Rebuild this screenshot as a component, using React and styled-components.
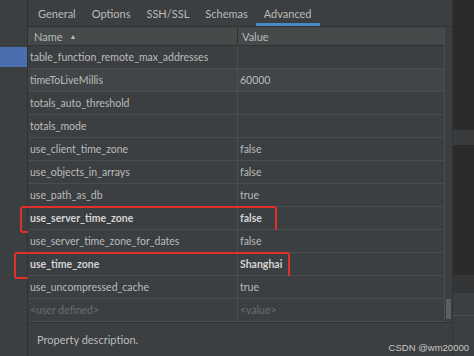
import React from 'react'
import styled, { createGlobalStyle } from 'styled-components'

const GlobalStyle = createGlobalStyle`
  html, body {
    margin: 0;
    padding: 0;
    background: #2b2b2b;
  }
  body {
    font-family: Lato, 'Open Sans', 'Liberation Sans', sans-serif;
  }
`

const tabs = ['General', 'Options', 'SSH/SSL', 'Schemas', 'Advanced']

const rows = [
  { name: 'table_function_remote_max_addresses', value: '' },
  { name: 'timeToLiveMillis', value: '60000', lit: true },
  { name: 'totals_auto_threshold', value: '' },
  { name: 'totals_mode', value: '' },
  { name: 'use_client_time_zone', value: 'false' },
  { name: 'use_objects_in_arrays', value: 'false' },
  { name: 'use_path_as_db', value: 'true' },
  { name: 'use_server_time_zone', value: 'false', bold: true, mark: { left: -8, width: 253 } },
  { name: 'use_server_time_zone_for_dates', value: 'false' },
  { name: 'use_time_zone', value: 'Shanghai', bold: true, mark: { left: -14, width: 272 } },
  { name: 'use_uncompressed_cache', value: 'true' },
  { name: '<user defined>', value: '<value>', placeholder: true },
]

const App = () => {
  return (
    <>
      <GlobalStyle />
      <Screen>
        <LeftStrip>
          <StripItem />
          <StripItem $selected />
        </LeftStrip>
        <Main>
          <TabBar>
            {tabs.map((t) => (
              <Tab key={t} $active={t === 'Advanced'}>
                {t}
              </Tab>
            ))}
          </TabBar>
          <TableWrap>
            <Table>
              <HeaderRow>
                <HeadCell>
                  Name <SortArrow>▲</SortArrow>
                </HeadCell>
                <HeadCell $value>Value</HeadCell>
              </HeaderRow>
              {rows.map((r) => (
                <Row key={r.name} $lit={r.lit}>
                  <Cell $bold={r.bold} $placeholder={r.placeholder}>
                    {r.name}
                  </Cell>
                  <Cell $value $bold={r.bold} $placeholder={r.placeholder}>
                    {r.value}
                  </Cell>
                  {r.mark && (
                    <Mark style={{ left: r.mark.left, width: r.mark.width }} />
                  )}
                </Row>
              ))}
            </Table>
            <ScrollTrack>
              <ScrollThumb />
            </ScrollTrack>
          </TableWrap>
          <Description>Property description.</Description>
        </Main>
        <RightPane>
          <Band $h={130} $bg='#2b2b2b' />
          <Band $h={15} $bg='#393b3c' />
          <Band $h={130} $bg='#2b2b2b' />
          <Band $h={18} $bg='#333536' />
          <Band $h={22} $bg='#3c3f41' $line />
          <Band $h={41} $bg='#3c3f41' />
        </RightPane>
        <Watermark>CSDN @wm20000</Watermark>
      </Screen>
    </>
  )
}

const Screen = styled.div`
  position: relative;
  width: 474px;
  height: 356px;
  overflow: hidden;
  display: flex;
  background: #3c3f41;
  color: #bbbbbb;
  font-size: 10.5px;
`

const LeftStrip = styled.div`
  width: 27px;
  flex: none;
  background: #3c3f41;
  border-right: 1px solid #2f3133;
  display: flex;
  flex-direction: column;
`

const StripItem = styled.div`
  height: ${(p) => (p.$selected ? '20px' : '47px')};
  background: ${(p) => (p.$selected ? '#4b6eaf' : 'transparent')};
`

const Main = styled.div`
  width: 424px;
  flex: none;
  display: flex;
  flex-direction: column;
  background: #3c3f41;
  border-right: 1px solid #313335;
`

const TabBar = styled.div`
  height: 26px;
  display: flex;
  align-items: stretch;
  padding-left: 2px;
  border-bottom: 1px solid #323232;
`

const Tab = styled.div`
  padding: 0 8px;
  display: flex;
  align-items: center;
  font-size: 11px;
  color: #bbbbbb;
  box-shadow: ${(p) => (p.$active ? 'inset 0 -3px 0 #4a88c7' : 'none')};
`

const TableWrap = styled.div`
  display: flex;
  height: 295px;
  border-bottom: 1px solid #323232;
`

const Table = styled.div`
  width: 417px;
  display: flex;
  flex-direction: column;
`

const HeaderRow = styled.div`
  height: 18px;
  display: grid;
  grid-template-columns: 209px 1fr;
  background: #45494a;
  border-bottom: 1px solid #323232;
`

const HeadCell = styled.div`
  display: flex;
  align-items: center;
  padding-left: ${(p) => (p.$value ? '4px' : '6px')};
  border-left: ${(p) => (p.$value ? '1px solid #323232' : 'none')};
  font-size: 11px;
  color: #bbbbbb;
`

const SortArrow = styled.span`
  font-size: 7px;
  margin-left: 7px;
  color: #bbbbbb;
`

const Row = styled.div`
  position: relative;
  height: 23px;
  display: grid;
  grid-template-columns: 209px 1fr;
  border-bottom: 1px solid #4a4d4f;
  box-sizing: border-box;
  background: ${(p) => (p.$lit ? '#424547' : '#3c3f41')};
`

const Cell = styled.div`
  display: flex;
  align-items: center;
  padding-left: 2px;
  border-left: ${(p) => (p.$value ? '1px solid #4a4d4f' : 'none')};
  font-size: 10.5px;
  font-weight: ${(p) => (p.$bold ? 700 : 400)};
  color: ${(p) =>
    p.$placeholder ? '#6a6c6e' : p.$bold ? '#d4d4d4' : '#bbbbbb'};
  white-space: nowrap;
  overflow: hidden;
`

const Mark = styled.div`
  position: absolute;
  top: -1px;
  bottom: -4px;
  border: 2px solid #e0302b;
  border-radius: 3px;
  pointer-events: none;
`

const ScrollTrack = styled.div`
  width: 7px;
  position: relative;
  border-left: 1px solid #4a4d4f;
  background: #3c3f41;
  display: flex;
  flex-direction: column;
  justify-content: flex-end;
  padding-bottom: 3px;
`

const ScrollThumb = styled.div`
  height: 20px;
  margin: 0 1px;
  background: #5c5f61;
`

const Description = styled.div`
  flex: 1;
  display: flex;
  align-items: center;
  padding-left: 9px;
  font-size: 11px;
  color: #bbbbbb;
`

const RightPane = styled.div`
  flex: 1;
  display: flex;
  flex-direction: column;
`

const Band = styled.div`
  height: ${(p) => p.$h}px;
  flex: none;
  background: ${(p) => p.$bg};
  border-bottom: ${(p) => (p.$line ? '1px solid #4a4d4f' : 'none')};
`

const Watermark = styled.div`
  position: absolute;
  right: 5px;
  bottom: 3px;
  font-family: 'Liberation Sans', Arial, sans-serif;
  font-size: 9.5px;
  color: #c8c8c8;
`

export default App
